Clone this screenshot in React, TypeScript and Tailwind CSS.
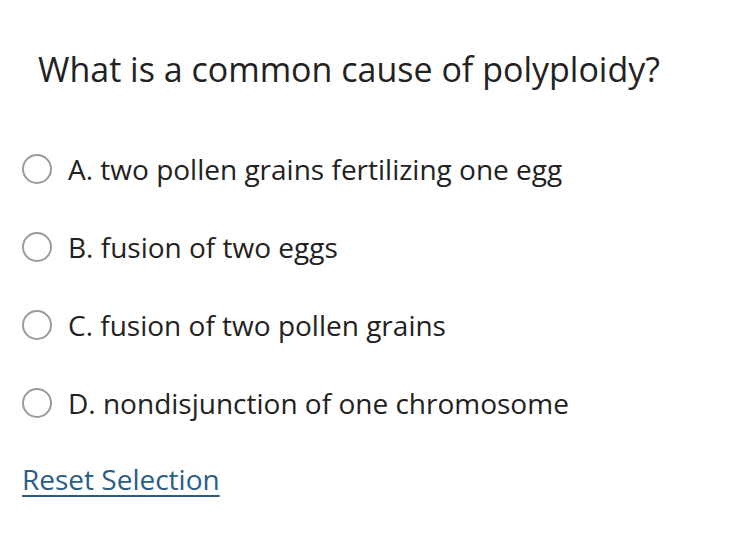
import React from 'react';

const options = [
    'A. two pollen grains fertilizing one egg',
    'B. fusion of two eggs',
    'C. fusion of two pollen grains',
    'D. nondisjunction of one chromosome',
];

export default function App() {
    return (
        <div className="min-h-screen bg-white text-[#222] font-['Open_Sans',sans-serif]">
            <div className="px-[22px] pt-[46px]">
                <h1 className="pl-[16px] text-[34px] leading-[46px] font-normal">
                    What is a common cause of polyploidy?
                </h1>
                <div className="mt-[59px] flex flex-col gap-[42px]">
                    {options.map((opt) => (
                        <label key={opt} className="flex items-center gap-[16px] cursor-pointer">
                            <span className="h-[30px] w-[30px] rounded-full border-2 border-[#9a9a9a] bg-white" />
                            <span className="text-[28px] leading-[36px]">{opt}</span>
                        </label>
                    ))}
                </div>
                <a href="#" className="mt-[40px] inline-block text-[28px] leading-[36px] text-[#2b5d86] underline underline-offset-[5px]">
                    Reset Selection
                </a>
            </div>
        </div>
    );
}
